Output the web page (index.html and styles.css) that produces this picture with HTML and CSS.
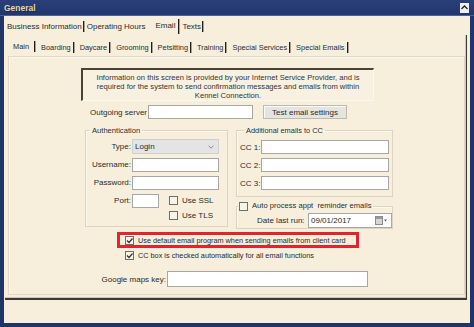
FILE: index.html
```html
<!DOCTYPE html>
<html lang="en">

<head>
    <meta charset="UTF-8">
    <title>General - Email</title>
    <link rel="stylesheet" href="styles.css">
</head>

<body>
    <div class="window">
        <header class="titlebar">
            <span class="title">General</span>
            <button class="collapse" aria-label="Collapse">
                <svg width="7" height="5" viewBox="0 0 7 5"><path d="M0.5 4 L3.5 1 L6.5 4" fill="none" stroke="#222" stroke-width="1.3"/></svg>
            </button>
        </header>

        <div class="frame">
            <ul class="tabs outer-tabs">
                <li>Business Information</li>
                <li class="before-active">Operating Hours</li>
                <li class="active">Email</li>
                <li>Texts</li>
            </ul>

            <div class="tab-panel">
                <ul class="tabs inner-tabs">
                    <li class="active">Main</li>
                    <li>Boarding</li>
                    <li>Daycare</li>
                    <li>Grooming</li>
                    <li>Petsitting</li>
                    <li>Training</li>
                    <li>Special Services</li>
                    <li>Special Emails</li>
                </ul>

                <div class="inner-panel">
                    <div class="notice">
                        Information on this screen is provided by your Internet Service Provider, and is<br>
                        required for the system to send confirmation messages and emails from within<br>
                        Kennel Connection.
                    </div>

                    <div class="row outgoing">
                        <label class="field-label">Outgoing server</label>
                        <input type="text" class="text-input server-input">
                        <button class="btn">Test email settings</button>
                    </div>

                    <div class="columns">
                        <fieldset class="group auth">
                            <legend>Authentication</legend>
                            <div class="form-row type-row">
                                <label class="side-label">Type:</label>
                                <div class="select">
                                    <span>Login</span>
                                    <svg width="6" height="4" viewBox="0 0 6 4"><path d="M0.5 0.8 L3 3.2 L5.5 0.8" fill="none" stroke="#8a8a8a" stroke-width="1"/></svg>
                                </div>
                            </div>
                            <div class="form-row">
                                <label class="side-label">Username:</label>
                                <input type="text" class="text-input wide">
                            </div>
                            <div class="form-row">
                                <label class="side-label">Password:</label>
                                <input type="password" class="text-input wide">
                            </div>
                            <div class="form-row port-row">
                                <label class="side-label">Port:</label>
                                <input type="text" class="text-input port">
                                <div class="port-checks">
                                    <label class="check"><span class="box"></span>Use SSL</label>
                                    <label class="check"><span class="box"></span>Use TLS</label>
                                </div>
                            </div>
                        </fieldset>

                        <div class="right-col">
                            <fieldset class="group cc">
                                <legend>Additional emails to CC</legend>
                                <div class="form-row">
                                    <label class="cc-label">CC 1:</label>
                                    <input type="text" class="text-input cc-input">
                                </div>
                                <div class="form-row">
                                    <label class="cc-label">CC 2:</label>
                                    <input type="text" class="text-input cc-input">
                                </div>
                                <div class="form-row">
                                    <label class="cc-label">CC 3:</label>
                                    <input type="text" class="text-input cc-input">
                                </div>
                            </fieldset>

                            <fieldset class="group auto">
                                <legend><label class="check"><span class="box"></span>Auto process appt&nbsp; reminder emails</label></legend>
                                <div class="form-row date-row">
                                    <label class="date-label">Date last run:</label>
                                    <div class="date-input">
                                        <span>09/01/2017</span>
                                        <span class="cal-btn">
                                            <svg width="13" height="9" viewBox="0 0 13 9">
                                                <rect x="0.5" y="0.5" width="7" height="8" fill="#d6d6d6" stroke="#8c8c8c"/>
                                                <rect x="1" y="1" width="6" height="2" fill="#9a9a9a"/>
                                                <path d="M9 3.5 L12 3.5 L10.5 5.5 Z" fill="#555"/>
                                            </svg>
                                        </span>
                                    </div>
                                </div>
                            </fieldset>
                        </div>
                    </div>

                    <div class="highlight">
                        <label class="check"><span class="box checked"></span>Use default email program when sending emails from client card</label>
                    </div>
                    <label class="check cc-auto"><span class="box checked"></span>CC box is checked automatically for all email functions</label>

                    <div class="row maps">
                        <label class="field-label">Google maps key:</label>
                        <input type="text" class="text-input maps-input">
                    </div>
                </div>
            </div>
        </div>
    </div>
</body>

</html>
```

FILE: styles.css
```css
* {
    box-sizing: border-box;
}

body {
    margin: 0;
    padding: 0;
    font-family: 'Liberation Sans', Arial, sans-serif;
    font-size: 8px;
    color: #2a2a2a;
    background: #1f3467;
}

.window {
    width: 474px;
    height: 327px;
    background: #1f3467;
    padding: 0 4px 4px 4px;
    display: flex;
    flex-direction: column;
}

.titlebar {
    height: 16px;
    margin: 0 -4px;
    padding: 0 5px 0 4px;
    display: flex;
    align-items: center;
    justify-content: space-between;
    background: linear-gradient(#2b4079, #22366d);
    border-bottom: 1px solid #4e6096;
}

.title {
    font-weight: bold;
    font-size: 8.5px;
    color: #e4dc9e;
    text-shadow: 1px 1px 0 #1a2550;
}

.collapse {
    width: 9px;
    height: 10px;
    padding: 0;
    border: none;
    background: #eef0f4;
    display: flex;
    align-items: center;
    justify-content: center;
}

.frame {
    flex: 1;
    background: #f7efdc;
    padding: 2px 3px 0 1px;
    display: flex;
    flex-direction: column;
}

.tabs {
    list-style: none;
    margin: 0;
    padding: 0;
    display: flex;
    align-items: center;
}

.tabs li {
    padding: 0 1px 0 2px;
    line-height: 11px;
    border-right: 1px solid #1e1e1e;
    box-shadow: 1px 0 0 #a8a295;
    margin-right: 1px;
    white-space: nowrap;
}

.tabs li.before-active {
    border-right-color: transparent;
    box-shadow: none;
}

.tabs li.active {
    border-right: none;
    box-shadow: none;
    position: relative;
    top: -1px;
}

.outer-tabs {
    height: 17px;
}

.outer-tabs li.active {
    padding: 0 3px 2px 7px;
    line-height: 13px;
    border-right: 1px solid #1e1e1e;
    box-shadow: 1px 0 0 #a8a295;
    top: 0;
}

.tab-panel {
    height: 265px;
    border-right: 1px solid #3c3c3c;
    border-bottom: 2px solid #3a3a3a;
    box-shadow: inset -1px -1px 0 #cfc7b2;
    padding: 3px 2px 0 3px;
}

.inner-tabs {
    height: 18px;
    padding-left: 2px;
    font-size: 7.4px;
}

.inner-tabs li {
    padding: 0 2px 0 5px;
    line-height: 11px;
}

.inner-tabs li.active {
    padding: 0 5px 0 3px;
    border-right: 1px solid #1e1e1e;
    box-shadow: 1px 0 0 #a8a295;
}

.inner-panel {
    height: 239px;
    width: 457px;
    border: 1px solid #e2d9c3;
    box-shadow: inset 1px 1px 0 #fbf7ee;
    padding: 11px 0 0 0;
}

.notice {
    margin-left: 72px;
    width: 293px;
    height: 33px;
    border-top: 2px solid #4a4234;
    border-left: 2px solid #4a4234;
    border-right: 1px solid #fbf8f0;
    border-bottom: 1px solid #fbf8f0;
    background: #f8f1e1;
    text-align: center;
    line-height: 9px;
    font-size: 7.6px;
    padding-top: 3px;
    color: #333;
    white-space: nowrap;
}

.row {
    display: flex;
    align-items: center;
}

.outgoing {
    margin-top: 4px;
    height: 14px;
    margin-left: 81px;
}

.field-label {
    text-align: right;
    padding-right: 1px;
    white-space: nowrap;
}

.outgoing .field-label {
    width: 58px;
}

.text-input {
    height: 14px;
    border: 1px solid #a7a7a7;
    background: #ffffff;
    padding: 0;
    margin: 0;
    font: inherit;
}

.server-input {
    width: 105px;
}

.btn {
    margin-left: 10px;
    width: 84px;
    height: 14px;
    padding: 0;
    font: inherit;
    color: #2a2a2a;
    background: #e6e4de;
    border: 1px solid #bdbab2;
    box-shadow: inset 1px 1px 0 #fafafa;
}

.columns {
    display: flex;
    align-items: flex-start;
    margin-top: 7px;
    margin-left: 76px;
}

.group {
    margin: 0;
    padding: 0;
    min-inline-size: 0;
    border: 1px solid #ddd4bf;
    box-shadow: inset 1px 1px 0 #fdfaf2;
}

.group legend {
    padding: 0 2px;
    margin-left: 4px;
    line-height: 9px;
    font-size: 7.6px;
}

.form-row {
    display: flex;
    align-items: center;
}

.auth {
    width: 143px;
    height: 101px;
    padding-top: 4px;
}

.side-label {
    width: 46px;
    text-align: right;
    padding-right: 1px;
    line-height: 14px;
}

.type-row {
    height: 15px;
}

.select {
    width: 87px;
    height: 15px;
    background: #e4e4e4;
    border: 1px solid #cfcfcf;
    display: flex;
    align-items: center;
    justify-content: space-between;
    padding: 0 4px 0 2px;
}

.auth .form-row + .form-row {
    margin-top: 4px;
}

.wide {
    width: 87px;
}

.auth .port-row {
    margin-top: 6px;
    align-items: flex-start;
}

.port {
    width: 27px;
}

.port-checks {
    margin-left: 10px;
    margin-top: 2px;
    display: flex;
    flex-direction: column;
    gap: 6px;
}

.check {
    display: flex;
    align-items: center;
    white-space: nowrap;
}

.box {
    width: 9px;
    height: 9px;
    border: 1px solid #6e6e6e;
    margin-right: 4px;
    background: #f9f4e8;
    display: inline-block;
}

.box.checked {
    background: #f9f4e8 url("data:image/svg+xml,%3Csvg xmlns='http://www.w3.org/2000/svg' width='7' height='7'%3E%3Cpath d='M1 3.5 L3 5.5 L6.5 1.5' fill='none' stroke='%23333' stroke-width='1.2'/%3E%3C/svg%3E") center no-repeat;
}

.right-col {
    margin-left: 8px;
    width: 157px;
}

.cc {
    width: 157px;
    height: 71px;
    padding: 5px 0 0 3px;
}

.cc legend {
    font-size: 7.4px;
}

.cc .form-row + .form-row {
    margin-top: 4px;
}

.cc-label {
    width: 21px;
}

.cc-input {
    width: 128px;
}

.auto {
    margin-top: 4px;
    width: 157px;
    height: 28px;
}

.auto legend {
    margin-left: 1px;
    padding: 0 2px 0 1px;
    line-height: 10px;
}

.date-row {
    margin-top: 2px;
    padding-left: 20px;
}

.date-label {
    width: 51px;
}

.date-input {
    width: 84px;
    height: 15px;
    background: #fff;
    border: 1px solid #a7a7a7;
    display: flex;
    align-items: center;
    justify-content: space-between;
    padding: 0 3px 0 2px;
}

.cal-btn {
    display: flex;
}

.highlight {
    margin-top: 3px;
    margin-left: 108px;
    width: 242px;
    height: 16px;
    border: 3px solid #e0262c;
    padding-left: 5px;
    display: flex;
    align-items: center;
    font-size: 7.3px;
}

.cc-auto {
    margin-top: 3px;
    margin-left: 116px;
    font-size: 7.3px;
}

.maps {
    margin-top: 11px;
    margin-left: 88px;
}

.maps .field-label {
    width: 70px;
}

.maps-input {
    width: 201px;
    height: 16px;
}
```
